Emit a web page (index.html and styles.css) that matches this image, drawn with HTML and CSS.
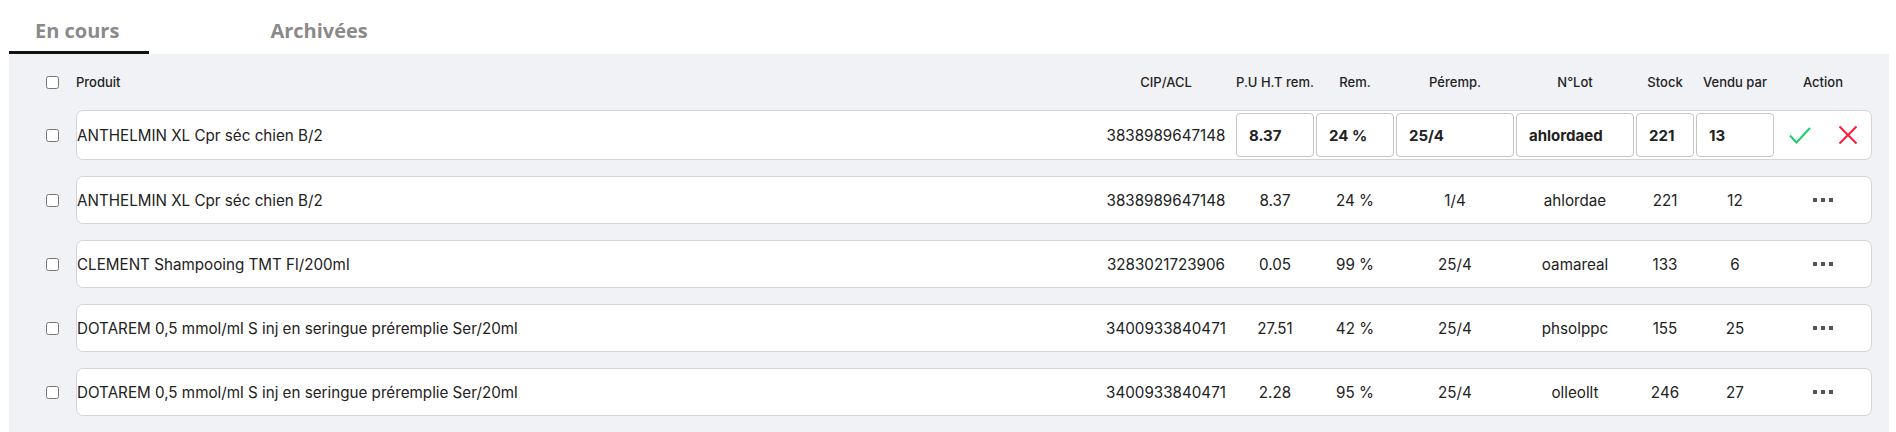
FILE: index.html
```html
<!DOCTYPE html>
<html lang="fr">
<head>
	<meta charset="UTF-8">
	<meta name="viewport" content="width=device-width, initial-scale=1.0">
	<title>Commandes</title>
	<link rel="stylesheet" href="styles.css">
</head>
<body>
	<div class="page">
		<div class="tabs">
			<button class="tab active">En cours</button>
			<button class="tab">Archivées</button>
		</div>

		<div class="panel">
			<div class="line head">
				<input type="checkbox" class="check">
				<div class="cols">
					<div class="c-prod">Produit</div>
					<div>CIP/ACL</div>
					<div>P.U H.T rem.</div>
					<div>Rem.</div>
					<div>Péremp.</div>
					<div>N°Lot</div>
					<div>Stock</div>
					<div>Vendu par</div>
					<div>Action</div>
				</div>
			</div>

			<div class="line">
				<input type="checkbox" class="check">
				<div class="cols row editing">
					<div class="c-prod">ANTHELMIN XL Cpr séc chien B/2</div>
					<div>3838989647148</div>
					<div><input class="field" value="8.37"></div>
					<div><input class="field" value="24 %"></div>
					<div><input class="field" value="25/4"></div>
					<div><input class="field" value="ahlordaed"></div>
					<div><input class="field" value="221"></div>
					<div><input class="field" value="13"></div>
					<div class="actions">
						<svg width="22" height="17" viewBox="0 0 22 17"><path d="M1 8.5 L7.5 15.5 L21 1" fill="none" stroke="#1ccf6c" stroke-width="2"/></svg>
						<svg width="20" height="20" viewBox="0 0 20 20"><path d="M1.5 1.5 L18.5 18.5 M18.5 1.5 L1.5 18.5" fill="none" stroke="#ff1a3c" stroke-width="2"/></svg>
					</div>
				</div>
			</div>

			<div class="line">
				<input type="checkbox" class="check">
				<div class="cols row">
					<div class="c-prod">ANTHELMIN XL Cpr séc chien B/2</div>
					<div>3838989647148</div>
					<div>8.37</div>
					<div>24 %</div>
					<div>1/4</div>
					<div>ahlordae</div>
					<div>221</div>
					<div>12</div>
					<div class="dots"><span></span><span></span><span></span></div>
				</div>
			</div>

			<div class="line">
				<input type="checkbox" class="check">
				<div class="cols row">
					<div class="c-prod">CLEMENT Shampooing TMT Fl/200ml</div>
					<div>3283021723906</div>
					<div>0.05</div>
					<div>99 %</div>
					<div>25/4</div>
					<div>oamareal</div>
					<div>133</div>
					<div>6</div>
					<div class="dots"><span></span><span></span><span></span></div>
				</div>
			</div>

			<div class="line">
				<input type="checkbox" class="check">
				<div class="cols row">
					<div class="c-prod">DOTAREM 0,5 mmol/ml S inj en seringue préremplie Ser/20ml</div>
					<div>3400933840471</div>
					<div>27.51</div>
					<div>42 %</div>
					<div>25/4</div>
					<div>phsolppc</div>
					<div>155</div>
					<div>25</div>
					<div class="dots"><span></span><span></span><span></span></div>
				</div>
			</div>

			<div class="line">
				<input type="checkbox" class="check">
				<div class="cols row">
					<div class="c-prod">DOTAREM 0,5 mmol/ml S inj en seringue préremplie Ser/20ml</div>
					<div>3400933840471</div>
					<div>2.28</div>
					<div>95 %</div>
					<div>25/4</div>
					<div>olleollt</div>
					<div>246</div>
					<div>27</div>
					<div class="dots"><span></span><span></span><span></span></div>
				</div>
			</div>
		</div>
	</div>
</body>
</html>
```

FILE: styles.css
```css
body {
	margin: 0;
	padding: 0;
	font-family: Inter, "Noto Sans", sans-serif;
	color: #222;
	background: #fff;
}
.page {
	padding: 0 7px 0 9px;
}
.tabs {
	display: flex;
	gap: 95px;
	height: 54px;
}
.tab {
	height: 54px;
	box-sizing: border-box;
	padding: 10px 30px 0 26px;
	border: none;
	border-bottom: 3px solid transparent;
	background: transparent;
	font-family: "Open Sans", sans-serif;
	font-size: 20px;
	font-weight: 700;
	color: #8a8a8a;
	cursor: pointer;
}
.tab.active {
	border-bottom-color: #111;
}
.panel {
	background: #f1f2f6;
	padding: 16px 17px 17px 37px;
	display: flex;
	flex-direction: column;
	gap: 16px;
}
.line {
	display: flex;
	align-items: center;
	gap: 17px;
}
.check {
	margin: 0;
	width: 13px;
	height: 13px;
	flex: none;
}
.cols {
	flex: 1;
	box-sizing: border-box;
	display: grid;
	grid-template-columns: 1fr 138px 80px 80px 120px 120px 60px 80px 96px;
	align-items: center;
	text-align: center;
	border: 1px solid transparent;
}
.cols .c-prod {
	text-align: left;
}
.head .cols {
	height: 24px;
	font-size: 13px;
	font-weight: 500;
}
.head .c-prod {
	margin-left: -1px;
}
.row {
	height: 48px;
	background: #fff;
	border-color: #d3d4d8;
	border-radius: 7px;
	font-size: 15.2px;
}
.row.editing {
	height: 50px;
	padding: 2px 0;
}
.field {
	display: block;
	width: calc(100% - 2px);
	height: 44px;
	margin: 0 1px;
	box-sizing: border-box;
	padding: 0 0 0 12px;
	border: 1px solid #c4c5c9;
	border-radius: 4px;
	font-family: Inter, "Noto Sans", sans-serif;
	font-size: 15px;
	font-weight: 700;
	color: #222;
	background: #fff;
}
.actions {
	display: flex;
	justify-content: center;
	align-items: center;
	gap: 27px;
}
.dots {
	display: flex;
	justify-content: center;
	gap: 4px;
}
.dots span {
	width: 4px;
	height: 4px;
	background: #555;
}
```
